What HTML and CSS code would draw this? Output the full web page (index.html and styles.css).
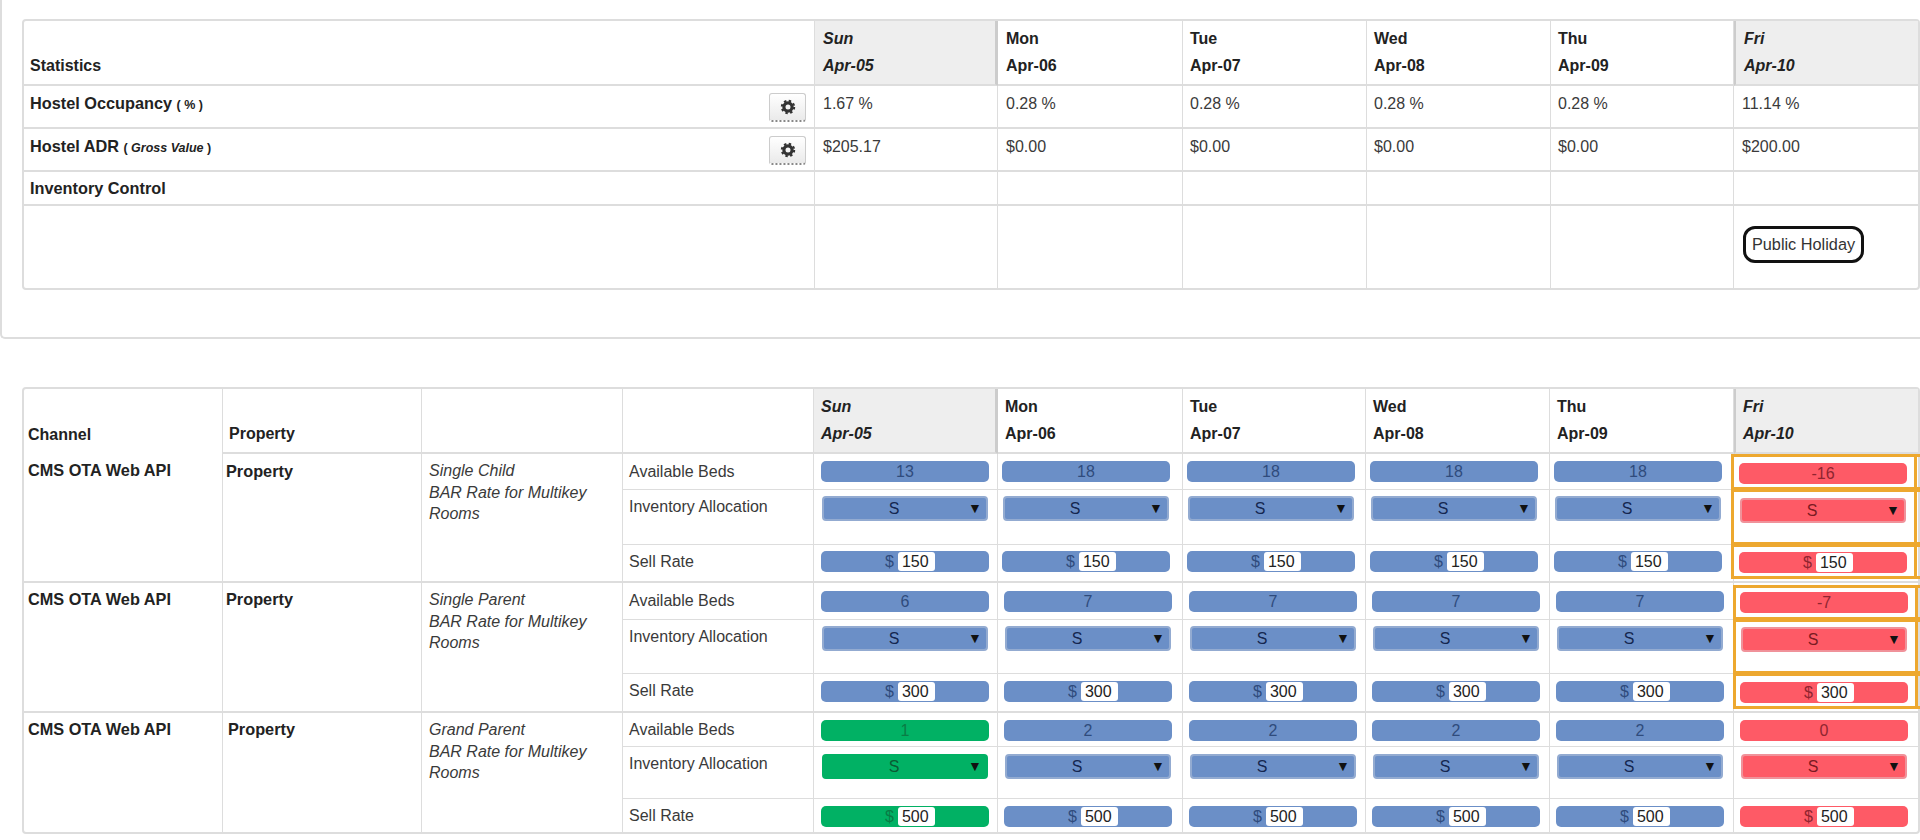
FILE: index.html
```html
<!DOCTYPE html>
<html lang="en">
<head>
  <meta charset="UTF-8">
  <title>Inventory Control</title>
  <link rel="stylesheet" href="styles.css">
</head>
<body>

  <div class="panel">
    <div class="grid-box">
      <table class="grid">
        <colgroup>
          <col class="c-stat"><col class="c183"><col class="c185"><col class="c184"><col class="c184"><col class="c183"><col>
        </colgroup>
        <tr class="head">
          <th>Statistics</th>
          <th class="today sun-head">Sun<br>Apr-05</th>
          <th>Mon<br>Apr-06</th>
          <th>Tue<br>Apr-07</th>
          <th>Wed<br>Apr-08</th>
          <th>Thu<br>Apr-09</th>
          <th class="today fri-head">Fri<br>Apr-10</th>
        </tr>
        <tr class="stat">
          <td>
            <div class="stat-name">
              <span><b>Hostel Occupancy</b> <small>( % )</small></span>
              <button class="gear">
                <svg width="16" height="16" viewBox="0 0 16 16"><circle cx="8" cy="8" r="4.1" fill="none" stroke="#333" stroke-width="3.2"/><circle cx="8" cy="8" r="6.2" fill="none" stroke="#333" stroke-width="2" stroke-dasharray="2.435 2.435"/></svg>
              </button>
            </div>
          </td>
          <td>1.67 %</td><td>0.28 %</td><td>0.28 %</td><td>0.28 %</td><td>0.28 %</td><td>11.14 %</td>
        </tr>
        <tr class="stat">
          <td>
            <div class="stat-name">
              <span><b>Hostel ADR</b> <small>( <i>Gross Value</i> )</small></span>
              <button class="gear">
                <svg width="16" height="16" viewBox="0 0 16 16"><circle cx="8" cy="8" r="4.1" fill="none" stroke="#333" stroke-width="3.2"/><circle cx="8" cy="8" r="6.2" fill="none" stroke="#333" stroke-width="2" stroke-dasharray="2.435 2.435"/></svg>
              </button>
            </div>
          </td>
          <td>$205.17</td><td>$0.00</td><td>$0.00</td><td>$0.00</td><td>$0.00</td><td>$200.00</td>
        </tr>
        <tr class="inv">
          <td><b>Inventory Control</b></td>
          <td></td><td></td><td></td><td></td><td></td><td></td>
        </tr>
        <tr class="events">
          <td></td><td></td><td></td><td></td><td></td><td></td>
          <td><div class="holiday">Public Holiday</div></td>
        </tr>
      </table>
    </div>
  </div>

  <div class="grid-box second">
    <table class="grid">
      <colgroup>
        <col class="c199"><col class="c199"><col class="c201"><col class="c191"><col class="c184"><col class="c185"><col class="c183"><col class="c184"><col class="c184"><col>
      </colgroup>
      <tr class="head">
        <th class="chan">Channel</th>
        <th class="prop-head">Property</th>
        <th></th>
        <th></th>
        <th class="today sun-head">Sun<br>Apr-05</th>
        <th>Mon<br>Apr-06</th>
        <th>Tue<br>Apr-07</th>
        <th>Wed<br>Apr-08</th>
        <th>Thu<br>Apr-09</th>
        <th class="today fri-head">Fri<br>Apr-10</th>
      </tr>

      <!-- Single Child -->
      <tr class="g1 r-beds">
        <td class="chan end" rowspan="3"><b>CMS OTA Web API</b></td>
        <td class="prop end" rowspan="3"><b>Property</b></td>
        <td class="room end" rowspan="3">Single Child<br>BAR Rate for Multikey<br>Rooms</td>
        <td class="lbl">Available Beds</td>
        <td class="day sun"><div class="pill blue">13</div></td>
        <td class="day"><div class="pill blue">18</div></td>
        <td class="day"><div class="pill blue">18</div></td>
        <td class="day"><div class="pill blue">18</div></td>
        <td class="day"><div class="pill blue">18</div></td>
        <td class="day flag flag-first up"><div class="pill red">-16</div></td>
      </tr>
      <tr class="g1 r-alloc">
        <td class="lbl">Inventory Allocation</td>
        <td class="day sun"><div class="sel blue"><span>S</span><em>▼</em></div></td>
        <td class="day"><div class="sel blue"><span>S</span><em>▼</em></div></td>
        <td class="day"><div class="sel blue"><span>S</span><em>▼</em></div></td>
        <td class="day"><div class="sel blue"><span>S</span><em>▼</em></div></td>
        <td class="day"><div class="sel blue"><span>S</span><em>▼</em></div></td>
        <td class="day flag up"><div class="sel red"><span>S</span><em>▼</em></div></td>
      </tr>
      <tr class="g1 r-rate end-row">
        <td class="lbl">Sell Rate</td>
        <td class="day sun"><div class="pill rate blue">$<span class="amt">150</span></div></td>
        <td class="day"><div class="pill rate blue">$<span class="amt">150</span></div></td>
        <td class="day"><div class="pill rate blue">$<span class="amt">150</span></div></td>
        <td class="day"><div class="pill rate blue">$<span class="amt">150</span></div></td>
        <td class="day"><div class="pill rate blue">$<span class="amt">150</span></div></td>
        <td class="day flag flag-last"><div class="pill rate red">$<span class="amt">150</span></div></td>
      </tr>

      <!-- Single Parent -->
      <tr class="g2 r-beds">
        <td class="chan end" rowspan="3"><b>CMS OTA Web API</b></td>
        <td class="prop end" rowspan="3"><b>Property</b></td>
        <td class="room end" rowspan="3">Single Parent<br>BAR Rate for Multikey<br>Rooms</td>
        <td class="lbl">Available Beds</td>
        <td class="day sun"><div class="pill blue">6</div></td>
        <td class="day"><div class="pill blue">7</div></td>
        <td class="day"><div class="pill blue">7</div></td>
        <td class="day"><div class="pill blue">7</div></td>
        <td class="day"><div class="pill blue">7</div></td>
        <td class="day flag flag-b flag-first"><div class="pill red">-7</div></td>
      </tr>
      <tr class="g2 r-alloc">
        <td class="lbl">Inventory Allocation</td>
        <td class="day sun"><div class="sel blue"><span>S</span><em>▼</em></div></td>
        <td class="day"><div class="sel blue"><span>S</span><em>▼</em></div></td>
        <td class="day"><div class="sel blue"><span>S</span><em>▼</em></div></td>
        <td class="day"><div class="sel blue"><span>S</span><em>▼</em></div></td>
        <td class="day"><div class="sel blue"><span>S</span><em>▼</em></div></td>
        <td class="day flag flag-b"><div class="sel red"><span>S</span><em>▼</em></div></td>
      </tr>
      <tr class="g2 r-rate end-row">
        <td class="lbl">Sell Rate</td>
        <td class="day sun"><div class="pill rate blue">$<span class="amt">300</span></div></td>
        <td class="day"><div class="pill rate blue">$<span class="amt">300</span></div></td>
        <td class="day"><div class="pill rate blue">$<span class="amt">300</span></div></td>
        <td class="day"><div class="pill rate blue">$<span class="amt">300</span></div></td>
        <td class="day"><div class="pill rate blue">$<span class="amt">300</span></div></td>
        <td class="day flag flag-b flag-last"><div class="pill rate red">$<span class="amt">300</span></div></td>
      </tr>

      <!-- Grand Parent -->
      <tr class="g3 r-beds">
        <td class="chan" rowspan="3"><b>CMS OTA Web API</b></td>
        <td class="prop prop-wide" rowspan="3"><b>Property</b></td>
        <td class="room" rowspan="3">Grand Parent<br>BAR Rate for Multikey<br>Rooms</td>
        <td class="lbl">Available Beds</td>
        <td class="day sun"><div class="pill green">1</div></td>
        <td class="day"><div class="pill blue">2</div></td>
        <td class="day"><div class="pill blue">2</div></td>
        <td class="day"><div class="pill blue">2</div></td>
        <td class="day"><div class="pill blue">2</div></td>
        <td class="day plain"><div class="pill red">0</div></td>
      </tr>
      <tr class="g3 r-alloc">
        <td class="lbl">Inventory Allocation</td>
        <td class="day sun"><div class="sel green"><span>S</span><em>▼</em></div></td>
        <td class="day"><div class="sel blue"><span>S</span><em>▼</em></div></td>
        <td class="day"><div class="sel blue"><span>S</span><em>▼</em></div></td>
        <td class="day"><div class="sel blue"><span>S</span><em>▼</em></div></td>
        <td class="day"><div class="sel blue"><span>S</span><em>▼</em></div></td>
        <td class="day plain"><div class="sel red"><span>S</span><em>▼</em></div></td>
      </tr>
      <tr class="g3 r-rate last-row">
        <td class="lbl">Sell Rate</td>
        <td class="day sun"><div class="pill rate green">$<span class="amt">500</span></div></td>
        <td class="day"><div class="pill rate blue">$<span class="amt">500</span></div></td>
        <td class="day"><div class="pill rate blue">$<span class="amt">500</span></div></td>
        <td class="day"><div class="pill rate blue">$<span class="amt">500</span></div></td>
        <td class="day"><div class="pill rate blue">$<span class="amt">500</span></div></td>
        <td class="day plain"><div class="pill rate red">$<span class="amt">500</span></div></td>
      </tr>
    </table>
  </div>

</body>
</html>
```

FILE: styles.css
```css
html, body {
  height: 100%;
}

body {
  margin: 0;
  overflow: hidden;
  background: #fff;
  font-family: "Liberation Sans", Arial, sans-serif;
  font-size: 16px;
  line-height: 20px;
  color: #3a3a3a;
}

.panel {
  border-left: 2px solid #ddd;
  border-bottom: 2px solid #ddd;
  border-bottom-left-radius: 5px;
  padding: 19px 0 47px 20px;
}

.grid-box {
  border: 2px solid #ddd;
  border-radius: 4px;
  box-sizing: border-box;
  width: 1898px;
}

.second {
  margin: 48px 0 0 22px;
}

.grid {
  border-collapse: separate;
  border-spacing: 0;
  table-layout: fixed;
  width: 1894px;
}

.c-stat { width: 791px; }
.c183 { width: 183px; }
.c184 { width: 184px; }
.c185 { width: 185px; }
.c191 { width: 191px; }
.c199 { width: 199px; }
.c201 { width: 201px; }

th, td {
  padding: 8px 0 0 7px;
  text-align: left;
  vertical-align: top;
  border-right: 1px solid #ddd;
  border-bottom: 2px solid #ddd;
}

th:last-child, td:last-child {
  border-right: none;
}

.panel th:first-child, .panel td:first-child {
  padding-left: 6px;
}

.panel td:first-child {
  padding-top: 7px;
}

.panel th:nth-child(2), .panel td:nth-child(2),
.panel th:nth-child(3), .panel td:nth-child(3),
.panel th:last-child, .panel td:last-child {
  padding-left: 8px;
}

/* header row */
.head {
  height: 65px;
}

.head th {
  padding-top: 0;
  padding-bottom: 5px;
  vertical-align: bottom;
  line-height: 27px;
  font-weight: bold;
  color: #222;
}

.today {
  background: #eee;
  font-style: italic;
}

.sun-head {
  border-right: 3px solid #ccc;
}

.fri-head {
  border-left: 2px solid #ccc;
}

b {
  font-size: 16.3px;
  color: #222;
}

/* statistics table */
.stat {
  height: 43px;
}

.stat-name {
  display: flex;
  justify-content: space-between;
  padding-right: 8px;
}

small {
  font-size: 12.5px;
  font-weight: bold;
  color: #222;
}

.gear {
  width: 37px;
  height: 29px;
  padding: 0;
  display: flex;
  align-items: center;
  justify-content: center;
  background: linear-gradient(#fff, #eaeaea);
  border: 1px solid #ccc;
  border-bottom: 2px dotted #888;
  border-radius: 3px;
}

.inv {
  height: 34px;
}

.panel .inv td {
  padding-top: 6px;
}

.events {
  height: 82px;
}

.events td {
  border-bottom: none;
}

.holiday {
  box-sizing: border-box;
  width: 121px;
  height: 37px;
  margin: 12px 0 0 1px;
  border: 3px solid #111;
  border-radius: 12px;
  font-size: 16.3px;
  line-height: 31px;
  text-align: center;
  white-space: nowrap;
  color: #333;
}

/* rate table */
.g1.r-beds { height: 36px; }
.g1.r-alloc { height: 55px; }
.g1.r-rate { height: 38px; }
.g2.r-beds { height: 37px; }
.g2.r-alloc { height: 54px; }
.g2.r-rate { height: 39px; }
.g3.r-beds { height: 34px; }
.g3.r-alloc { height: 52px; }
.g3.r-rate { height: 33px; }

.chan {
  padding-left: 4px;
}

.head th.chan {
  padding-left: 4px;
  padding-bottom: 6px;
}

.chan, .prop, .room {
  padding-top: 6px;
  border-bottom: none;
}

.prop {
  padding-left: 3px;
}

.g1 .prop {
  padding-top: 7px;
}

.prop-wide {
  padding-left: 5px;
}

.head th.prop-head {
  padding-left: 6px;
}

.room {
  padding-left: 7px;
  font-style: italic;
  line-height: 21.7px;
}

.chan.end, .prop.end, .room.end {
  border-bottom: 2px solid #ddd;
}

.lbl {
  padding-top: 7px;
  padding-left: 6px;
}

.r-beds .lbl {
  padding-top: 8px;
}

.g3.r-beds .lbl {
  padding-top: 7px;
}

.lbl, .day {
  border-bottom-width: 1px;
}

.end-row td {
  border-bottom-width: 2px;
}

.last-row td {
  border-bottom: none;
}

.day {
  padding-top: 7px;
}

.g1 .day { padding-left: 4px; }
.g2 .day, .g3 .day { padding-left: 6px; }
.g1 .sun, .g2 .sun, .g3 .sun { padding-left: 7px; }
.g1 .flag { padding-left: 5px; }
.g2.r-beds .day { padding-top: 8px; }
.g1.r-alloc .day, .g2.r-alloc .day, .g1.r-rate .day { padding-top: 6px; }

.pill {
  box-sizing: border-box;
  width: 168px;
  height: 21px;
  border-radius: 5px;
  line-height: 21px;
  text-align: center;
}

.rate {
  display: flex;
  padding-left: 64px;
  text-align: left;
}

.amt {
  box-sizing: border-box;
  width: 37px;
  height: 19px;
  margin: 1px 0 0 4px;
  padding-left: 4px;
  background: #fff;
  border-radius: 3px;
  line-height: 19px;
  color: #222;
}

.sel {
  box-sizing: border-box;
  display: grid;
  grid-template-columns: 1fr 22px;
  width: 166px;
  height: 25px;
  margin-left: 1px;
  border: 2px solid #93abd1;
  border-radius: 4px;
  line-height: 21px;
  text-align: center;
}

.sel span {
  color: #14264f;
}

.sel em {
  font-style: normal;
  font-size: 14px;
  color: #111;
}

.blue { background: #6b8fc7; color: #2f4b7c; }
.red { background: #fe5a66; color: #8f2530; }
.green { background: #01b164; color: #0a7c45; }

.red.sel { border-color: #f0929a; }
.red.sel span { color: #7a1a22; }
.green.sel { border-color: #01b164; }
.green.sel span { color: #0a5a33; }

/* orange outline round the sold out cells, runs off the right edge */
.flag {
  position: relative;
}

.flag .pill, .flag .sel {
  margin-top: 1px;
}

.up .pill, .up .sel {
  margin-top: 2px;
}

.flag::after, .flag::before {
  content: "";
  position: absolute;
  box-sizing: border-box;
  top: -1px;
  bottom: -1px;
  border: 3px solid #eda82f;
}

.flag::after {
  left: -3px;
  right: 1px;
}

.flag::before {
  left: calc(100% - 1px);
  right: -2px;
  border-left: none;
  border-right: none;
}

.flag-b::after {
  left: -1px;
  right: 0;
}

.flag-b::before {
  left: 100%;
}

.flag-first::after, .flag-first::before {
  top: 0;
}

.flag-b.flag-first::after, .flag-b.flag-first::before {
  top: 2px;
}

.flag-last::after, .flag-last::before {
  bottom: 2px;
}
```
